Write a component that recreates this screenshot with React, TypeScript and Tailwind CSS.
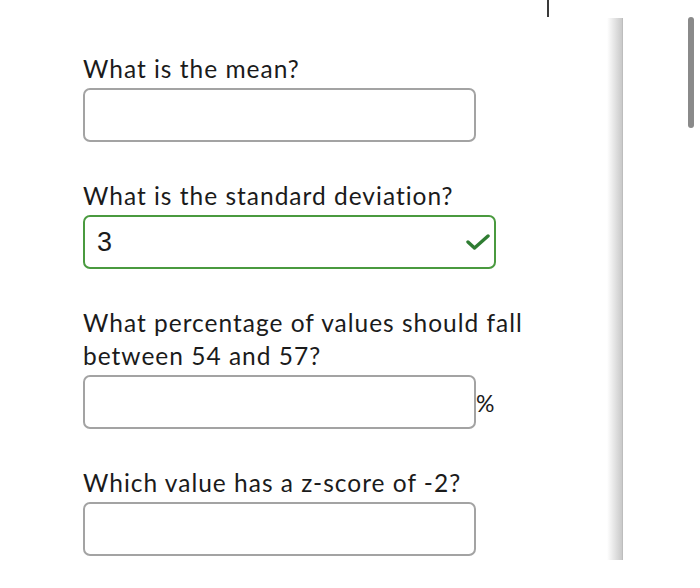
import React from 'react';

const labelCls = "text-[24.5px] leading-[33px] tracking-[1px] text-[#1b1b1b]";
const boxCls = "h-[54px] rounded-[7px] border-2 border-[#a3a3a3] bg-white";

export default function App() {
  return (
    <div className="flex w-[700px] h-[588px] bg-white overflow-hidden" style={{ fontFamily: 'Lato, "Noto Sans", sans-serif' }}>
      {/* question column */}
      <div className="w-[607px] shrink-0">
        <div className="ml-[547px] w-[2px] h-[17px] bg-[#3a3a3a]" />
        <div className="pl-[83px] pt-[35px]">
          <div className={labelCls}>What is the mean?</div>
          <div className={`${boxCls} mt-[3px] w-[393px]`} />

          <div className={`${labelCls} mt-[37px]`}>What is the standard deviation?</div>
          <div className="mt-[3px] w-[413px] h-[54px] rounded-[7px] border-2 border-[#4a9a3f] bg-white flex items-center justify-between pl-[12px] pr-[4px]">
            <span className="text-[27px] text-[#1b1b1b]" style={{ fontFamily: '"Liberation Sans", Arial, sans-serif' }}>3</span>
            <svg width="24" height="16" viewBox="0 0 24 16" fill="none">
              <polyline points="2,8 8.5,14 22,2" stroke="#2f7d32" strokeWidth="3.4" strokeLinecap="round" strokeLinejoin="round" />
            </svg>
          </div>

          <div className={`${labelCls} mt-[37px] w-[470px]`}>What percentage of values should fall between 54 and 57?</div>
          <div className="mt-[3px] flex items-center">
            <div className={`${boxCls} w-[393px]`} />
            <span className="text-[23px] text-[#1b1b1b] mt-[2px]">%</span>
          </div>

          <div className={`${labelCls} mt-[37px]`}>Which value has a z-score of -2?</div>
          <div className={`${boxCls} mt-[3px] w-[393px]`} />
        </div>
      </div>

      {/* panel edge */}
      <div className="w-[16px] shrink-0 mt-[18px] h-[542px] bg-gradient-to-r from-white via-[#e4e4e4] to-[#c9c9c9] border-r border-[#bdbdbd]" />

      {/* scrollbar */}
      <div className="ml-[65px] mt-[17px] w-[6px] h-[111px] rounded-full bg-[#8a8a8a]" />
    </div>
  );
}
